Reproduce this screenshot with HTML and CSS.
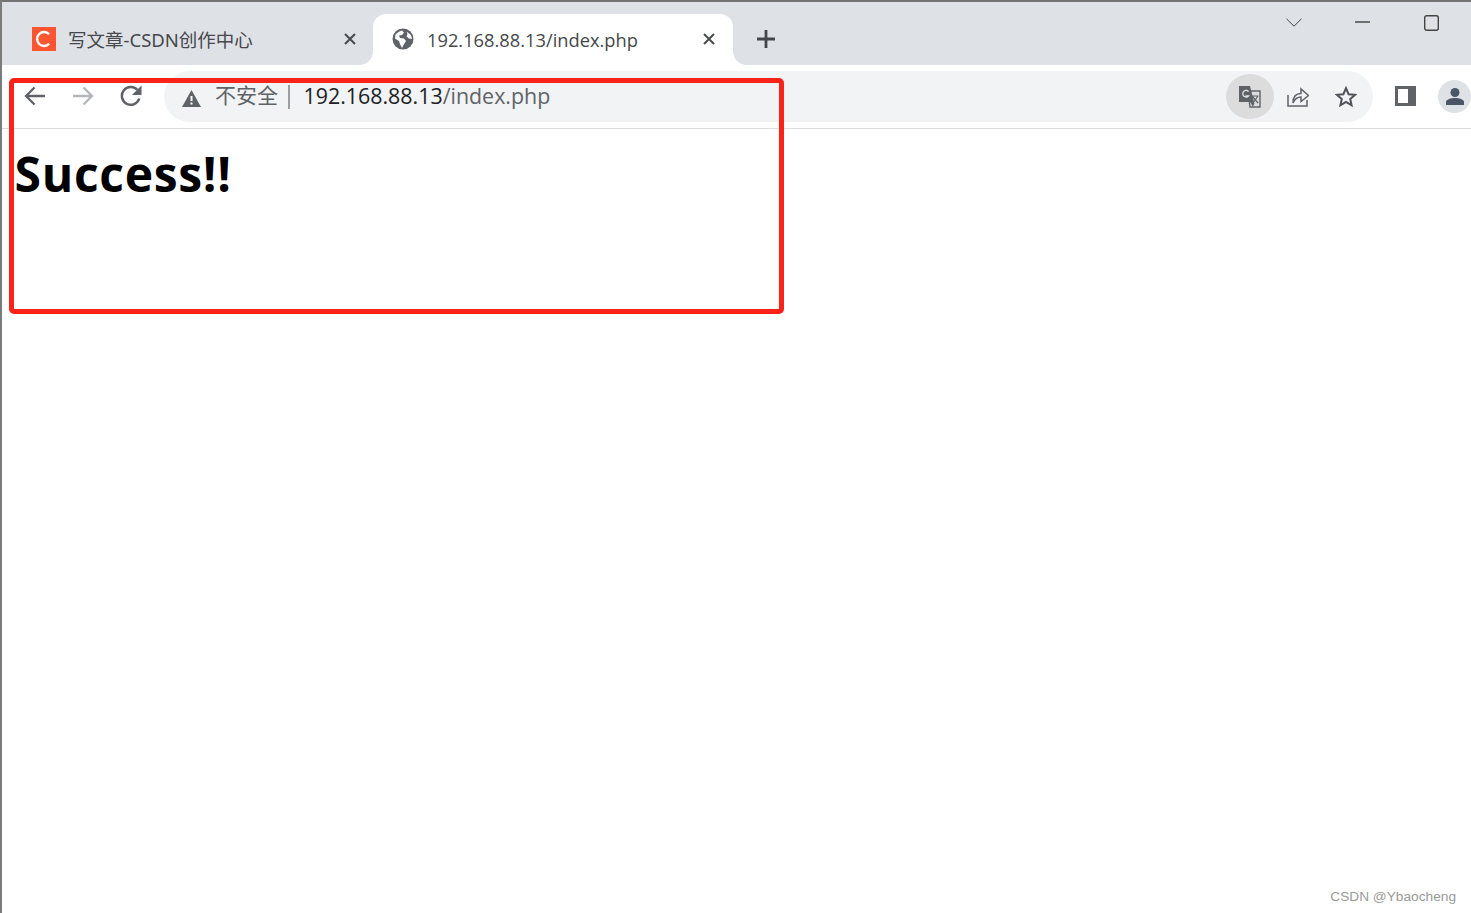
FILE: index.html
```html
<!DOCTYPE html>
<html lang="zh">
<head>
<meta charset="utf-8">
<title>192.168.88.13/index.php</title>
<link rel="stylesheet" href="styles.css">
</head>
<body>
<div class="window">
  <header class="tabstrip">
    <div class="tab">
      <svg class="favicon" viewBox="0 0 24 24"><rect width="24" height="24" fill="#fc5531"/><path d="M17.2 7.200A7 7 0 1 0 17.200 16.800" fill="none" stroke="#fff" stroke-width="2.400"/></svg>
      <span class="tab-title">写文章-CSDN创作中心</span>
      <svg class="tab-close" viewBox="0 0 12 12"><path d="M1 1L11 11M11 1L1 11" stroke="#4a4c50" stroke-width="2.100"/></svg>
    </div>
    <div class="tab tab-active">
      <svg class="globe" viewBox="0 0 22 22"><circle cx="11" cy="11" r="10.500" fill="#5f6368"/><path d="M3.500 6.500C6 4 8 3 10 2.500L12 4.500 10 7 7 7.500 8 10 12 10.500 14 13 11.500 17 10 20 8 16 7 13 3 10.500ZM14.500 3.500L19 7 20 11 17 10.500 14.500 8.500 15.500 6Z" fill="#fff"/></svg>
      <span class="tab-title tab-title-active">192.168.88.13/index.php</span>
      <svg class="tab-close" viewBox="0 0 12 12"><path d="M1 1L11 11M11 1L1 11" stroke="#4a4c50" stroke-width="2.100"/></svg>
    </div>
    <svg class="new-tab" viewBox="0 0 18 18"><path d="M9 0V18M0 9H18" stroke="#44474a" stroke-width="2.800"/></svg>
    <div class="win-controls">
      <svg class="win-chevron" viewBox="0 0 16 9"><path d="M.5 .8L8 8.200 15.500 .8" fill="none" stroke="#444" stroke-width="1"/></svg>
      <svg class="win-min" viewBox="0 0 15 2"><path d="M0 1H15" stroke="#222" stroke-width="1.200"/></svg>
      <svg class="win-max" viewBox="0 0 15 16"><rect x=".7" y=".7" width="13.600" height="14.600" rx="2" fill="none" stroke="#444" stroke-width="1.400"/></svg>
    </div>
  </header>

  <nav class="toolbar">
    <svg class="nav-icon" viewBox="0 0 22 20"><path d="M21 10H2M10.500 1.500L2 10 10.500 18.500" fill="none" stroke="#5f6368" stroke-width="2.300"/></svg>
    <svg class="nav-icon nav-gap" viewBox="0 0 22 20"><path d="M1 10H20M11.500 1.500L20 10 11.500 18.500" fill="none" stroke="#b4b6b9" stroke-width="2.300"/></svg>
    <svg class="nav-reload nav-gap" viewBox="0 0 22 22"><path d="M19.300 13.500A8.900 8.900 0 1 1 17.300 4.800" fill="none" stroke="#5f6368" stroke-width="2.500"/><path d="M21.500 .5V10H12Z" fill="#5f6368"/></svg>

    <div class="omnibox">
      <svg class="warn" viewBox="0 0 19 17"><path d="M9.500 0L19 17H0Z" fill="#5f6368"/><path d="M8.500 6H10.500V11H8.500ZM8.500 12.500H10.500V14.500H8.500Z" fill="#fff"/></svg>
      <span class="insecure">不安全</span>
      <span class="sep"></span>
      <span class="url"><span class="url-host">192.168.88.13</span>/index.php</span>
      <span class="omni-spacer"></span>
      <span class="translate">
        <svg class="translate-icon" viewBox="0 0 22 22"><path d="M9 5H21V21H11Z" fill="#dcdcdc" stroke="#5f6368" stroke-width="1.400"/><path d="M0 0H11L15 16H0Z" fill="#5f6368"/><path d="M10 14L14 21 15.500 17Z" fill="#5f6368"/><path d="M9.500 5.500A3.300 3.300 0 1 0 9.500 10H6.500" fill="none" stroke="#e5e5e5" stroke-width="1.300"/><path d="M13 10L19 17M19 10L14 17M12.500 10H19.500" fill="none" stroke="#5f6368" stroke-width="1.200"/></svg>
      </span>
      <svg class="share" viewBox="0 0 22 21"><path d="M1 9V20H20V14" fill="none" stroke="#5f6368" stroke-width="1.500"/><path d="M6 17C6 11 9 7.500 14 7.500V3L21.500 9.500 14 15.500V11C10.500 11 8 12.500 6 17Z" fill="none" stroke="#5f6368" stroke-width="1.500"/></svg>
      <svg class="star" viewBox="0 0 22 21"><path d="M11 2.200L13.600 8.200 20 8.800 15.200 13 16.600 19.300 11 16 5.400 19.300 6.800 13 2 8.800 8.400 8.200Z" fill="none" stroke="#4f5256" stroke-width="2"/></svg>
    </div>

    <svg class="panel" viewBox="0 0 21 20"><rect width="21" height="20" fill="#5f6368"/><rect x="3" y="3" width="10" height="14" fill="#fff"/></svg>
    <span class="avatar">
      <svg class="avatar-icon" viewBox="0 0 20 20"><circle cx="10" cy="5.500" r="4.500" fill="#4a5568"/><path d="M1 18V15C1 12.500 6 11 10 11S19 12.500 19 15V18Z" fill="#4a5568"/></svg>
    </span>
  </nav>

  <main class="page">
    <h1 class="heading">Success!!</h1>
  </main>
</div>

<div class="highlight"></div>
<div class="watermark">CSDN @Ybaocheng</div>
</body>
</html>
```

FILE: styles.css
```css
* { box-sizing: border-box; }

html, body {
  margin: 0;
  height: 100%;
  background: #fff;
  overflow: hidden;
}

.window {
  height: 913px;
  display: flex;
  flex-direction: column;
  border-left: 2px solid #7b7b7b;
  font-family: "Open Sans", "Noto Sans CJK SC", sans-serif;
}

.tabstrip {
  height: 65px;
  flex: none;
  display: flex;
  align-items: flex-end;
  background: #dee1e6;
  border-top: 2px solid #737373;
}

.tab {
  width: 371px;
  height: 51px;
  display: flex;
  align-items: center;
  padding: 0 17px 1px 30px;
  flex: none;
}

.favicon {
  width: 24px;
  height: 24px;
  flex: none;
}

.tab-title {
  margin-left: 12px;
  padding-top: 2px;
  font-size: 18.500px;
  line-height: 24px;
  color: #45474a;
  white-space: nowrap;
  font-family: "Noto Sans", "Noto Sans CJK SC", sans-serif;
  flex: 1;
}

.tab-close {
  width: 12px;
  height: 12px;
  flex: none;
}

.tab-active {
  position: relative;
  width: 360px;
  padding: 0 18px 1px 19px;
  background: #fff;
  border-radius: 13px 13px 0 0;
}

.tab-active::before,
.tab-active::after {
  content: "";
  position: absolute;
  bottom: 0;
  width: 13px;
  height: 13px;
}

.tab-active::before {
  left: -13px;
  background: radial-gradient(circle at 0 0, #dee1e6 12.500px, #fff 13px);
}

.tab-active::after {
  right: -13px;
  background: radial-gradient(circle at 100% 0, #dee1e6 12.500px, #fff 13px);
}

.globe {
  width: 22px;
  height: 22px;
  flex: none;
}

.tab-title-active {
  margin-left: 13px;
  padding-top: 2px;
  font-size: 18.300px;
  color: #45474a;
  font-family: "Open Sans", sans-serif;
}

.new-tab {
  width: 18px;
  height: 18px;
  margin: 0 0 17px 24px;
  flex: none;
}

.win-controls {
  margin-left: auto;
  height: 100%;
  display: flex;
  align-items: flex-start;
  flex: none;
  padding-right: 32px;
}

.win-chevron { width: 16px; height: 9px; margin-top: 16px; }
.win-min { width: 15px; height: 2px; margin: 19px 0 0 53px; }
.win-max { width: 15px; height: 16px; margin: 13px 0 0 54px; }

.toolbar {
  height: 64px;
  flex: none;
  display: flex;
  align-items: flex-start;
  padding: 6px 0 0 22px;
  background: #fff;
  border-bottom: 1px solid #dadce0;
}

.nav-icon {
  width: 22px;
  height: 20px;
  margin-top: 15px;
  flex: none;
}

.nav-reload {
  width: 22px;
  height: 22px;
  margin-top: 14px;
  flex: none;
}

.nav-gap { margin-left: 26px; }

.omnibox {
  width: 1209px;
  height: 51px;
  margin-left: 22px;
  display: flex;
  align-items: center;
  flex: none;
  padding: 0 16px 0 18px;
  background: #f1f3f4;
  border-radius: 26px;
}

.warn { width: 19px; height: 17px; flex: none; margin-top: 3px; }

.insecure {
  margin-left: 14px;
  margin-top: -5px;
  font-size: 21px;
  font-family: "Noto Sans CJK SC", sans-serif;
  color: #5f6368;
  white-space: nowrap;
}

.sep {
  width: 2px;
  height: 24px;
  margin-left: 10px;
  background: #9a9da1;
  flex: none;
}

.url {
  margin-left: 13.500px;
  font-size: 21.400px;
  color: #5f6368;
  white-space: nowrap;
  margin-top: -2px;
}

.url-host { color: #202124; }

.omni-spacer { flex: 1; }

.translate {
  width: 48px;
  height: 45px;
  display: flex;
  align-items: center;
  justify-content: center;
  border-radius: 50%;
  background: #dcdcdc;
  flex: none;
}

.translate-icon { width: 22px; height: 22px; }

.share { width: 22px; height: 21px; margin-left: 13px; flex: none; }
.star { width: 22px; height: 21px; margin-left: 26px; flex: none; }

.panel {
  width: 21px;
  height: 20px;
  margin: 15px 0 0 22px;
  flex: none;
}

.avatar {
  width: 33px;
  height: 33px;
  margin: 9px 0 0 22px;
  border-radius: 50%;
  background: #dee1e6;
  display: flex;
  align-items: center;
  justify-content: center;
  flex: none;
}

.avatar-icon { width: 20px; height: 20px; }

.page {
  flex: 1;
  padding: 15px 0 0 12.500px;
}

.heading {
  margin: 0;
  font-family: "Open Sans", sans-serif;
  font-size: 48px;
  font-weight: 700;
  letter-spacing: .7px;
  line-height: 60px;
  color: #000;
}

.highlight {
  position: absolute;
  left: 8.500px;
  top: 77.500px;
  width: 775px;
  height: 236px;
  border: 5px solid #fb2218;
  border-radius: 5px;
}

.watermark {
  position: absolute;
  right: 15px;
  bottom: 7px;
  font-family: "Liberation Sans", sans-serif;
  font-size: 13.700px;
  line-height: 18px;
  color: #9a9a9a;
}
```
